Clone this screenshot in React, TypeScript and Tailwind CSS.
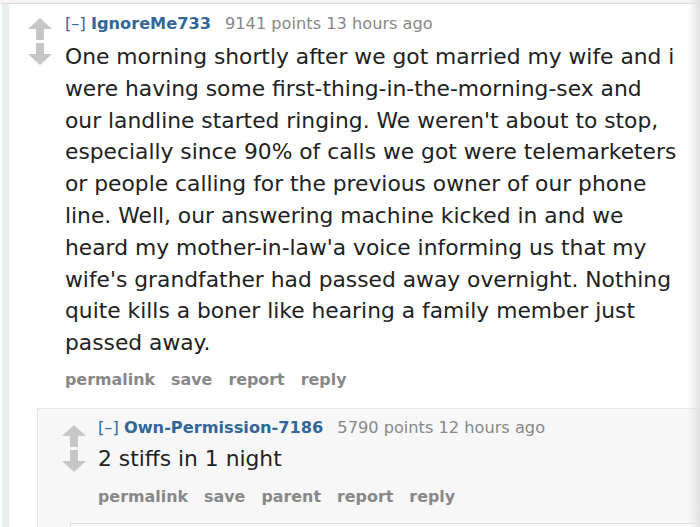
import React from 'react';

const font = { fontFamily: '"DejaVu Sans", Verdana, sans-serif' };

// gray up/down vote arrows
function Arrows() {
  return (
    <div className="flex flex-col items-center w-[24px] shrink-0">
      <svg width="24" height="22" viewBox="0 0 24 22">
        <path d="M12 0 L24 11 L16 11 L16 22 L8 22 L8 11 L0 11 Z" fill="#c6c6c6" />
      </svg>
      <svg width="24" height="22" viewBox="0 0 24 22" className="mt-[3px]">
        <path d="M8 0 L16 0 L16 11 L24 11 L12 22 L0 11 L8 11 Z" fill="#c6c6c6" />
      </svg>
    </div>
  );
}

function Tagline({ user, points, time }: { user: string; points: string; time: string }) {
  return (
    <div className="text-[16.2px] leading-[18px] whitespace-nowrap">
      <span className="text-[#369]">[–]</span>{' '}
      <span className="text-[#369] font-bold">{user}</span>
      <span className="text-[#888] ml-[14px]">{points} points {time}</span>
    </div>
  );
}

function Actions({ items }: { items: string[] }) {
  return (
    <div className="flex gap-[16px] text-[15.9px] leading-[18px] font-bold text-[#888] whitespace-nowrap">
      {items.map((i) => (
        <span key={i}>{i}</span>
      ))}
    </div>
  );
}

const lines = [
  'One morning shortly after we got married my wife and i',
  'were having some first-thing-in-the-morning-sex and',
  "our landline started ringing. We weren't about to stop,",
  'especially since 90% of calls we got were telemarketers',
  'or people calling for the previous owner of our phone',
  'line. Well, our answering machine kicked in and we',
  "heard my mother-in-law'a voice informing us that my",
  "wife's grandfather had passed away overnight. Nothing",
  'quite kills a boner like hearing a family member just',
  'passed away.',
];

export default function App() {
  return (
    <div className="relative w-[700px] h-[527px] overflow-hidden bg-white" style={font}>
      <div className="h-[3px] bg-[#f3f3f3]" />
      <div className="h-[1px] bg-[#dcdcdc]" />
      <div className="flex h-full">
        {/* left thread strip */}
        <div className="w-[2px] shrink-0 bg-white" />
        <div className="w-[7px] shrink-0 bg-[#e8eff3]" />
        <div className="flex-1 min-w-0">
          <div className="flex pt-[11px]">
            <div className="pl-[19px] pr-[13px] pt-[3px]">
              <Arrows />
            </div>
            <div className="min-w-0">
              <Tagline user="IgnoreMe733" points="9141" time="13 hours ago" />
              <div className="mt-[8px] text-[21.8px] leading-[31.8px] text-[#222] whitespace-nowrap">
                {lines.map((l) => (
                  <div key={l}>{l}</div>
                ))}
              </div>
              <div className="mt-[12px]">
                <Actions items={['permalink', 'save', 'report', 'reply']} />
              </div>
            </div>
          </div>
          {/* child comment */}
          <div className="ml-[28px] mt-[19px] border border-[#e4e4e4] bg-[#f7f7f7] h-[200px]">
            <div className="flex pt-[10px]">
              <div className="pl-[24px] pr-[12px] pt-[6px]">
                <Arrows />
              </div>
              <div className="min-w-0">
                <Tagline user="Own-Permission-7186" points="5790" time="12 hours ago" />
                <div className="mt-[6px] text-[21.8px] leading-[31.8px] text-[#222]">2 stiffs in 1 night</div>
                <div className="mt-[13px]">
                  <Actions items={['permalink', 'save', 'parent', 'report', 'reply']} />
                </div>
              </div>
            </div>
            <div className="ml-[32px] mt-[17px] border-t border-l border-[#e0e0e0] bg-white h-[40px]" />
          </div>
        </div>
      </div>
      {/* right edge shadow */}
      <div className="absolute top-0 right-0 w-[12px] h-full bg-gradient-to-r from-transparent to-[#e2e2e2]" />
    </div>
  );
}
